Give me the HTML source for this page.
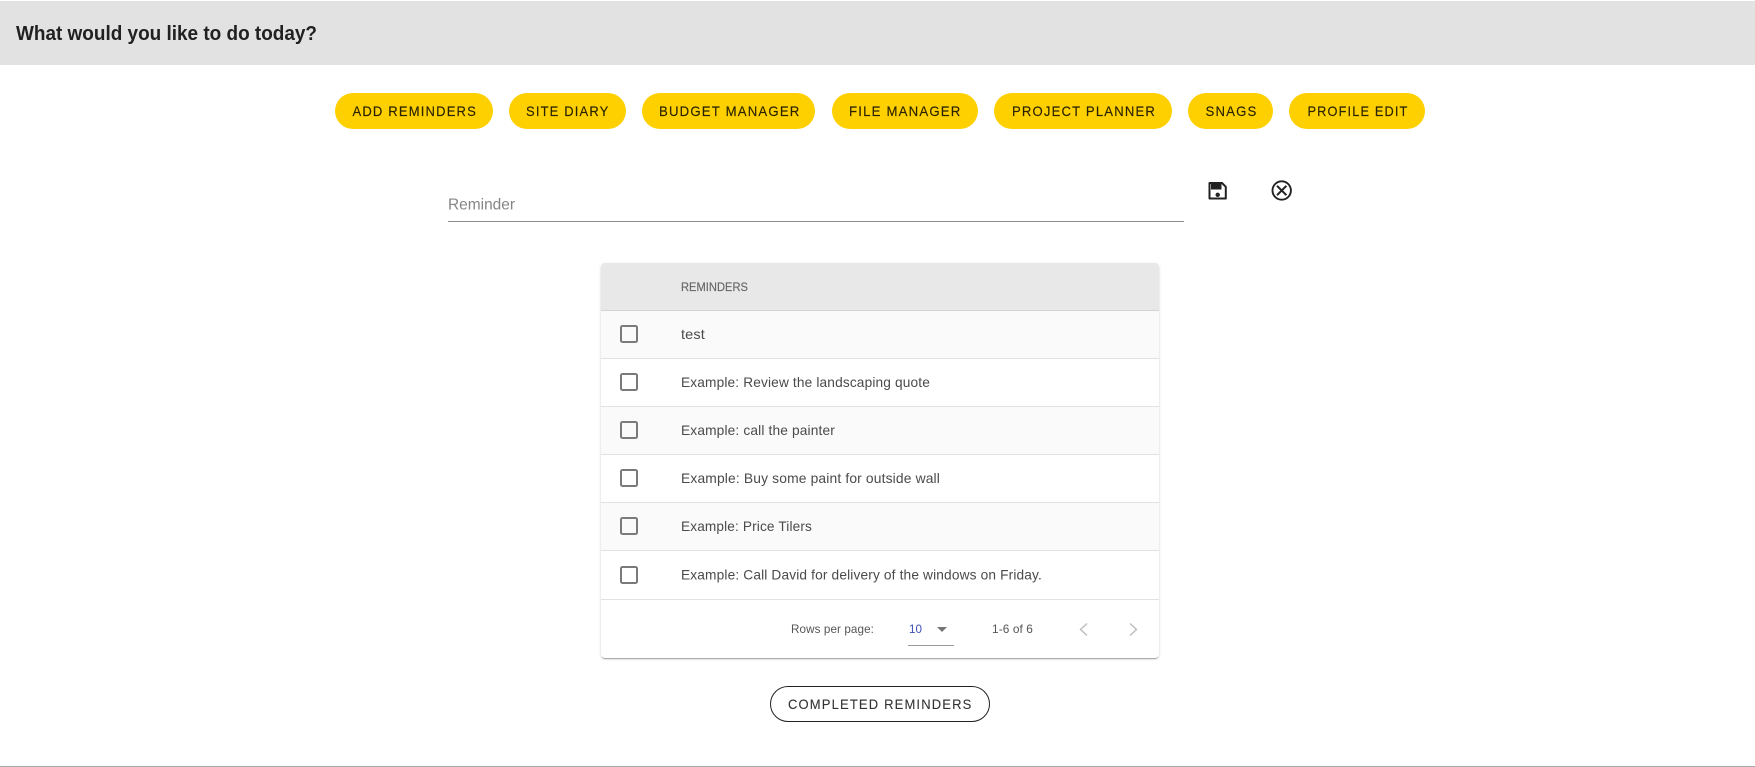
<!DOCTYPE html>
<html lang="en">
<head>
<meta charset="utf-8">
<title>What would you like to do today?</title>
<style>
html,body{margin:0;padding:0;background:#fff;width:1755px;height:767px;overflow:hidden}
body{position:relative;font-family:"Liberation Sans",sans-serif}
.a{position:absolute;box-sizing:border-box}
.btn{background:#ffd000;border-radius:18px;top:93px;height:36px}
.row{left:601px;width:558px;border-bottom:1px solid #e2e2e2}
.chk{left:620px;width:18px;height:18px;border:2px solid #7a7a7a;border-radius:2.500px}
svg{position:absolute;left:0;top:0}
text{font-family:"Liberation Sans",sans-serif}
.b{font-size:14px;fill:#2a2300;stroke:#2a2300;stroke-width:.15;letter-spacing:1.25px}
.r{font-size:14px;fill:#4a4a4a;letter-spacing:.15px}
.p{font-size:12px;fill:#555;letter-spacing:.1px}
</style>
</head>
<body>
<div class="a" style="left:0;top:1px;width:1755px;height:64px;background:#e2e2e2"></div>

<div class="a btn" style="left:335px;width:158px"></div>
<div class="a btn" style="left:509px;width:117px"></div>
<div class="a btn" style="left:642px;width:173px"></div>
<div class="a btn" style="left:832px;width:146px"></div>
<div class="a btn" style="left:994px;width:178px"></div>
<div class="a btn" style="left:1188px;width:85px"></div>
<div class="a btn" style="left:1289px;width:136px"></div>

<div class="a" style="left:448px;top:221px;width:736px;height:1px;background:#8c8c8c"></div>

<div class="a" style="left:601px;top:263px;width:558px;height:395px;background:#fff;border-radius:4px;box-shadow:0 2px 1px -1px rgba(0,0,0,.2),0 1px 1px 0 rgba(0,0,0,.14),0 1px 3px 0 rgba(0,0,0,.12)"></div>
<div class="a" style="left:601px;top:263px;width:558px;height:48px;background:#e8e8e8;border-radius:4px 4px 0 0;border-bottom:1px solid #d4d4d4"></div>
<div class="a row" style="top:311px;height:48px;background:#fafafa"></div>
<div class="a row" style="top:359px;height:48px;background:#fff"></div>
<div class="a row" style="top:407px;height:48px;background:#fafafa"></div>
<div class="a row" style="top:455px;height:48px;background:#fff"></div>
<div class="a row" style="top:503px;height:48px;background:#fafafa"></div>
<div class="a row" style="top:551px;height:49px;background:#fff"></div>

<div class="a chk" style="top:325px"></div>
<div class="a chk" style="top:373px"></div>
<div class="a chk" style="top:421px"></div>
<div class="a chk" style="top:469px"></div>
<div class="a chk" style="top:517px"></div>
<div class="a chk" style="top:566px"></div>

<div class="a" style="left:908px;top:645px;width:46px;height:1px;background:#9a9a9a"></div>
<div class="a" style="left:770px;top:686px;width:220px;height:36px;border:1px solid #222;border-radius:18px;background:#fff"></div>
<div class="a" style="left:0;top:766px;width:1755px;height:1px;background:#a8a8a8"></div>

<svg width="1755" height="767" viewBox="0 0 1755 767" xmlns="http://www.w3.org/2000/svg">
  <text x="16" y="40" font-size="20" font-weight="700" fill="#212121" textLength="301" lengthAdjust="spacingAndGlyphs">What would you like to do today?</text>

  <text class="b" x="352.500" y="116" textLength="124.500" lengthAdjust="spacingAndGlyphs">ADD REMINDERS</text>
  <text class="b" x="526" y="116" textLength="83.500" lengthAdjust="spacingAndGlyphs">SITE DIARY</text>
  <text class="b" x="659" y="116" textLength="141.500" lengthAdjust="spacingAndGlyphs">BUDGET MANAGER</text>
  <text class="b" x="849" y="116" textLength="112.500" lengthAdjust="spacingAndGlyphs">FILE MANAGER</text>
  <text class="b" x="1012" y="116" textLength="144" lengthAdjust="spacingAndGlyphs">PROJECT PLANNER</text>
  <text class="b" x="1205.500" y="116" textLength="52" lengthAdjust="spacingAndGlyphs">SNAGS</text>
  <text class="b" x="1307.500" y="116" textLength="101" lengthAdjust="spacingAndGlyphs">PROFILE EDIT</text>

  <text x="448" y="209.500" font-size="16" fill="#858585" textLength="67" lengthAdjust="spacingAndGlyphs">Reminder</text>

  <path d="M1209.500 183H1222L1225.800 186.800V198.500H1209.500Z" fill="none" stroke="#222" stroke-width="2" stroke-linejoin="round"/>
  <rect x="1211" y="184" width="10.500" height="5.500" fill="#222"/>
  <circle cx="1217.700" cy="194.800" r="2.200" fill="#222"/>

  <circle cx="1281.700" cy="190.500" r="9.200" fill="none" stroke="#222" stroke-width="1.900"/>
  <path d="M1277 185.800L1286.400 195.200M1286.400 185.800L1277 195.200" fill="none" stroke="#222" stroke-width="2"/>

  <text x="681" y="291" font-size="12" fill="#666" stroke="#666" stroke-width=".15" textLength="67" lengthAdjust="spacingAndGlyphs">REMINDERS</text>

  <text class="r" x="681" y="339" textLength="24" lengthAdjust="spacingAndGlyphs">test</text>
  <text class="r" x="681" y="387" textLength="249" lengthAdjust="spacingAndGlyphs">Example: Review the landscaping quote</text>
  <text class="r" x="681" y="435" textLength="154" lengthAdjust="spacingAndGlyphs">Example: call the painter</text>
  <text class="r" x="681" y="483" textLength="259" lengthAdjust="spacingAndGlyphs">Example: Buy some paint for outside wall</text>
  <text class="r" x="681" y="531" textLength="131" lengthAdjust="spacingAndGlyphs">Example: Price Tilers</text>
  <text class="r" x="681" y="579.500" textLength="361" lengthAdjust="spacingAndGlyphs">Example: Call David for delivery of the windows on Friday.</text>

  <text class="p" x="791" y="633" textLength="83" lengthAdjust="spacingAndGlyphs">Rows per page:</text>
  <text x="909" y="633" font-size="12" fill="#3f51b5" textLength="13" lengthAdjust="spacingAndGlyphs">10</text>
  <path d="M937 627h10l-5 5z" fill="#757575"/>
  <text class="p" x="992" y="633" textLength="41" lengthAdjust="spacingAndGlyphs">1-6 of 6</text>
  <path d="M1087 623.500L1080.500 629.500L1087 635.500" fill="none" stroke="#bdbdbd" stroke-width="1.400"/>
  <path d="M1130 623.500L1136.500 629.500L1130 635.500" fill="none" stroke="#bdbdbd" stroke-width="1.400"/>

  <text x="788" y="709" font-size="14" fill="#333" stroke="#333" stroke-width=".1" letter-spacing="1.25" textLength="184.500" lengthAdjust="spacingAndGlyphs">COMPLETED REMINDERS</text>
</svg>
</body>
</html>
